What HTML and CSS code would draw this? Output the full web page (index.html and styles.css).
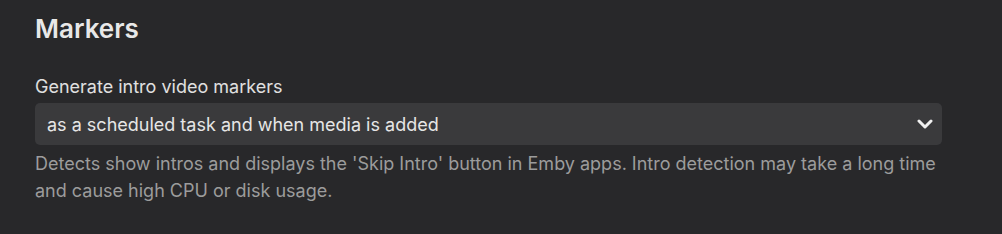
FILE: index.html
```html
<!DOCTYPE html>
<html>
<head>
    <title>Markers</title>
    <link rel="stylesheet" href="styles.css">
</head>
<body>
    <div class="section">
        <h2 class="section-title">Markers</h2>

        <div class="field">
            <label class="field-label" for="introMarkers">Generate intro video markers</label>
            <div class="select-wrap">
                <select class="select" id="introMarkers">
                    <option>as a scheduled task and when media is added</option>
                    <option>as a scheduled task</option>
                    <option>never</option>
                </select>
                <svg class="select-arrow" viewBox="0 0 16 10" width="16" height="10">
                    <path d="M2 2 L8 8 L14 2" fill="none" stroke="currentColor" stroke-width="3" stroke-linecap="round" stroke-linejoin="round"/>
                </svg>
            </div>
            <div class="field-description">
                Detects show intros and displays the 'Skip Intro' button in Emby apps. Intro detection may take a long time and cause high CPU or disk usage.
            </div>
        </div>
    </div>
</body>
</html>
```

FILE: styles.css
```css
body {
    margin: 0;
    padding: 0;
    font-family: Inter, 'Noto Sans', sans-serif;
    background: #28282a;
    color: #e6e6e6;
}

.section {
    padding: 13px 60px 0 35px;
}

.section-title {
    margin: 0;
    font-size: 26px;
    font-weight: 600;
    line-height: 32px;
    color: #e8e8e8;
}

.field {
    margin-top: 30px;
}

.field-label {
    display: block;
    font-size: 18px;
    line-height: 24px;
    color: #e0e0e0;
    margin-bottom: 4px;
}

.select-wrap {
    position: relative;
}

.select {
    display: block;
    width: 100%;
    height: 42px;
    padding: 0 40px 0 12px;
    border: none;
    border-radius: 5px;
    background: #3a3a3c;
    color: #e6e6e6;
    font-family: inherit;
    font-size: 18px;
    -webkit-appearance: none;
    appearance: none;
    outline: none;
}

.select-arrow {
    position: absolute;
    right: 9px;
    top: 16px;
    color: #f0f0f0;
    pointer-events: none;
}

.field-description {
    margin-top: 5px;
    font-size: 18px;
    line-height: 27px;
    color: #9c9c9c;
}
```
